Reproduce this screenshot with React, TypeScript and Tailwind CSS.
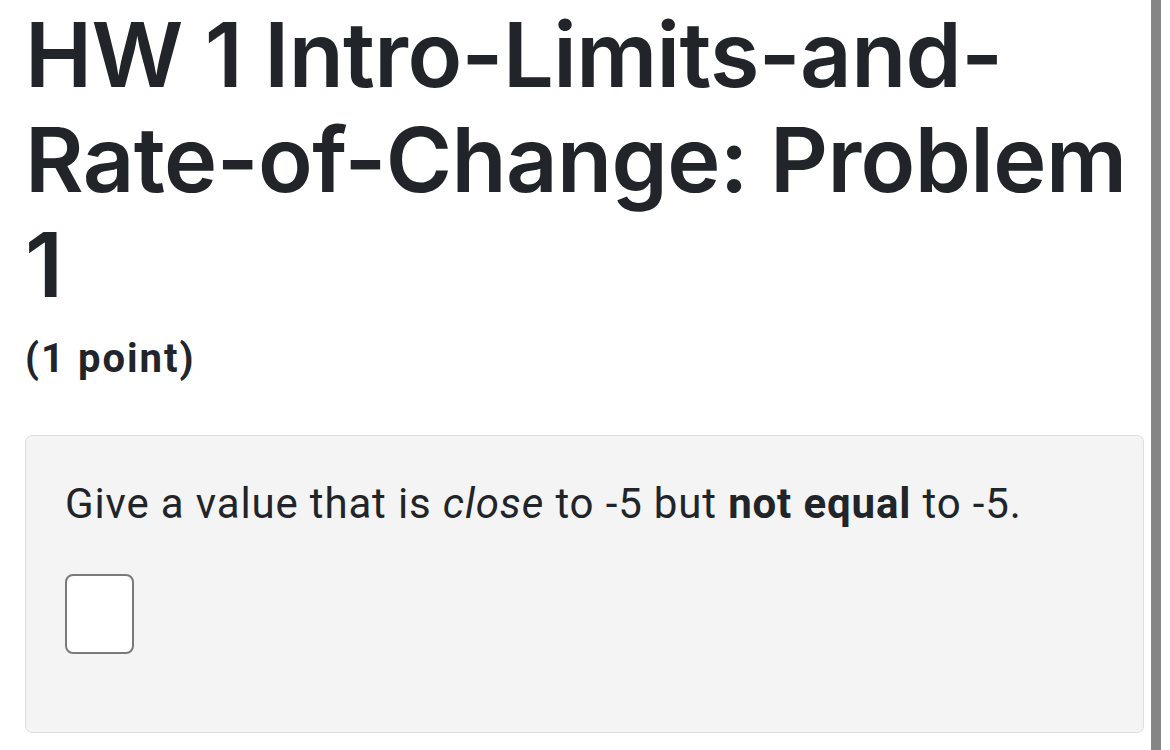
export default function App() {
  return (
    <div className="flex h-[750px] w-[1170px] overflow-hidden bg-white">
      <div className="flex-1 pl-[25px] pr-[7px]">
        <h1
          className="pt-[2px] text-[90px] leading-[105px] font-semibold tracking-[-0.6px] text-[#212529]"
          style={{ fontFamily: "Inter, 'Noto Sans', sans-serif" }}
        >
          HW 1 Intro-Limits-and-
          <br />
          Rate-of-Change: Problem
          <br />1
        </h1>
        <div
          className="mt-[20px] text-[40px] leading-[44px] font-bold tracking-[2px] text-[#212529]"
          style={{ fontFamily: "Roboto, 'Liberation Sans', sans-serif" }}
        >
          (1 point)
        </div>
        <div
          className="mt-[54px] h-[298px] rounded-[7px] border border-[#dedede] bg-[#f4f4f4] pl-[39px] pt-[40px] text-[42px] leading-[56px] tracking-[0.85px] text-[#212529]"
          style={{ fontFamily: "Roboto, 'Liberation Sans', sans-serif" }}
        >
          <p>
            Give a value that is <i>close</i> to -5 but <b>not equal</b> to -5.
          </p>
          <div className="mt-[42px] h-[80px] w-[69px] rounded-[8px] border-2 border-[#7a7a7a] bg-white" />
        </div>
      </div>
      <div className="w-[10px] bg-[#858585]" />
      <div className="w-[9px] bg-white" />
    </div>
  );
}
